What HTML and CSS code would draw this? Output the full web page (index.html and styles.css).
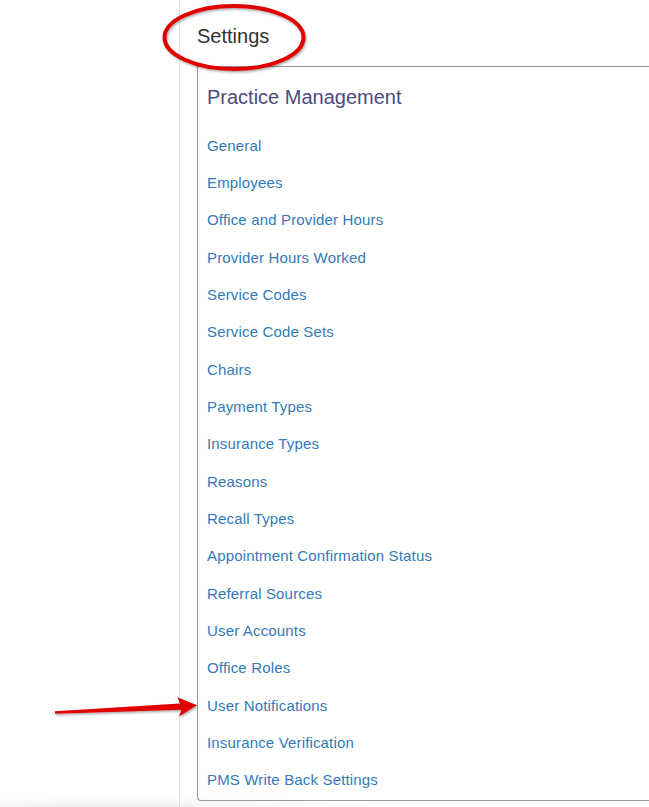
FILE: index.html
```html
<!DOCTYPE html>
<html lang="en">
<head>
<meta charset="utf-8">
<title>Settings</title>
<link rel="stylesheet" href="styles.css">
</head>
<body>
<div class="page">
  <div class="content">
    <h1 class="page-title">Settings</h1>
    <section class="panel">
      <h2 class="panel-title">Practice Management</h2>
      <ul class="links">
        <li><a href="#">General</a></li>
        <li><a href="#">Employees</a></li>
        <li><a href="#">Office and Provider Hours</a></li>
        <li><a href="#">Provider Hours Worked</a></li>
        <li><a href="#">Service Codes</a></li>
        <li><a href="#">Service Code Sets</a></li>
        <li><a href="#">Chairs</a></li>
        <li><a href="#">Payment Types</a></li>
        <li><a href="#">Insurance Types</a></li>
        <li><a href="#">Reasons</a></li>
        <li><a href="#">Recall Types</a></li>
        <li><a href="#">Appointment Confirmation Status</a></li>
        <li><a href="#">Referral Sources</a></li>
        <li><a href="#">User Accounts</a></li>
        <li><a href="#">Office Roles</a></li>
        <li><a href="#">User Notifications</a></li>
        <li><a href="#">Insurance Verification</a></li>
        <li><a href="#">PMS Write Back Settings</a></li>
      </ul>
    </section>
  </div>
</div>
<div class="bottom-shade"></div>
<svg class="annotation" width="649" height="807" viewBox="0 0 649 807" aria-hidden="true">
  <defs>
    <filter id="sh" x="-10%" y="-10%" width="120%" height="130%">
      <feDropShadow dx="1" dy="1.5" stdDeviation="1" flood-color="#000" flood-opacity="0.35"/>
    </filter>
  </defs>
  <ellipse cx="234" cy="37.5" rx="69.5" ry="31.5" fill="none" stroke="#e00000" stroke-width="4" filter="url(#sh)"/>
  <polygon points="55,711.2 180,703.4 177.5,697.3 197,705.2 179,716.6 181.5,709.8 55,713.8" fill="#e00000" filter="url(#sh)"/>
</svg>
</body>
</html>
```
FILE: styles.css
```css
html, body {
  margin: 0;
  padding: 0;
  height: 100%;
  overflow: hidden;
  background: #ffffff;
}

body {
  font-family: "Liberation Sans", Arial, sans-serif;
  position: relative;
}

.page {
  height: 100%;
  padding-left: 179px;
}

.content {
  height: 100%;
  border-left: 1px solid #e6e6e6;
  padding-left: 17px;
  padding-top: 26px;
  box-sizing: border-box;
}

.page-title {
  margin: 0;
  font-size: 20px;
  line-height: 20px;
  font-weight: normal;
  color: #333333;
}

.panel {
  margin-top: 20px;
  border: 1px solid #9a9a9a;
  border-right: none;
  border-radius: 0 0 0 4px;
  padding: 20px 0 1px 9px;
  box-sizing: border-box;
  background: #fff;
}

.panel-title {
  margin: 0;
  font-size: 20px;
  line-height: 20px;
  font-weight: normal;
  color: #4b4b80;
}

.links {
  list-style: none;
  margin: 19.6px 0 0;
  padding: 0;
}

.links li {
  height: 37.35px;
  line-height: 37.35px;
  font-size: 15px;
  letter-spacing: 0.16px;
}

.links a {
  color: #337ab7;
  text-decoration: none;
}

.bottom-shade {
  position: absolute;
  left: 0;
  bottom: 0;
  width: 420px;
  height: 10px;
  background: radial-gradient(ellipse 60% 100% at 30% 100%, rgba(0,0,0,0.07), rgba(0,0,0,0));
  pointer-events: none;
}

.annotation {
  position: absolute;
  left: 0;
  top: 0;
  pointer-events: none;
}
```
